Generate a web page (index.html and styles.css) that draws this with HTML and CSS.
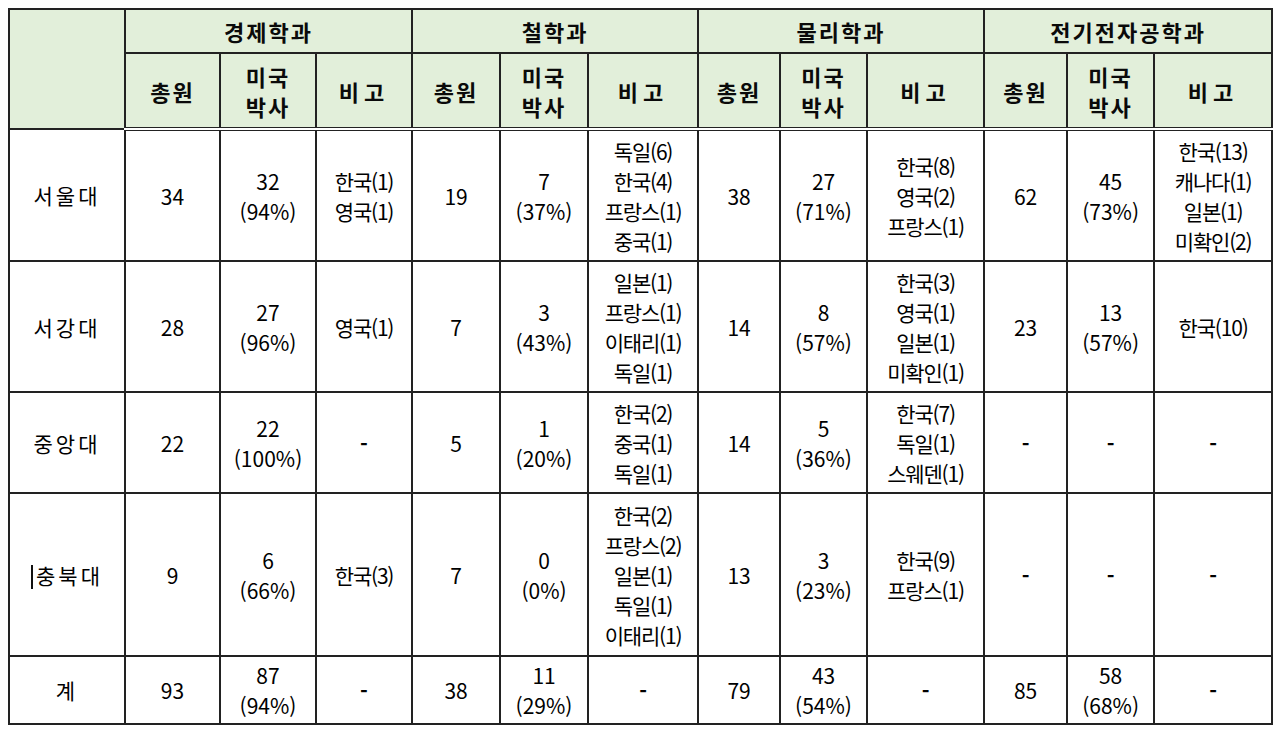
FILE: index.html
```html
<!DOCTYPE html>
<html lang="ko">
<head>
<meta charset="utf-8">
<link rel="stylesheet" href="styles.css">
</head>
<body>
<table class="tbl">
  <colgroup>
    <col class="c116"><col class="c95"><col class="c96"><col class="c96">
    <col class="c88"><col class="c88"><col class="c110">
    <col class="c82"><col class="c87"><col class="c117">
    <col class="c83"><col class="c87"><col class="c118">
  </colgroup>
  <thead>
    <tr class="h1">
      <th rowspan="2" class="corner"></th>
      <th colspan="3" class="grp">경제학과</th>
      <th colspan="3" class="grp">철학과</th>
      <th colspan="3" class="grp">물리학과</th>
      <th colspan="3" class="grp">전기전자공학과</th>
    </tr>
    <tr class="h2">
      <th>총원</th><th>미국<br>박사</th><th class="wide">비고</th>
      <th>총원</th><th>미국<br>박사</th><th class="wide">비고</th>
      <th>총원</th><th>미국<br>박사</th><th class="wide">비고</th>
      <th>총원</th><th>미국<br>박사</th><th class="wide">비고</th>
    </tr>
  </thead>
  <tbody>
    <tr class="r1">
      <td class="name">서울대</td>
      <td>34</td><td>32<br>(94%)</td><td class="note">한국(1)<br>영국(1)</td>
      <td>19</td><td>7<br>(37%)</td><td class="note">독일(6)<br>한국(4)<br>프랑스(1)<br>중국(1)</td>
      <td>38</td><td>27<br>(71%)</td><td class="note">한국(8)<br>영국(2)<br>프랑스(1)</td>
      <td>62</td><td>45<br>(73%)</td><td class="note">한국(13)<br>캐나다(1)<br>일본(1)<br>미확인(2)</td>
    </tr>
    <tr class="r2">
      <td class="name">서강대</td>
      <td>28</td><td>27<br>(96%)</td><td class="note">영국(1)</td>
      <td>7</td><td>3<br>(43%)</td><td class="note">일본(1)<br>프랑스(1)<br>이태리(1)<br>독일(1)</td>
      <td>14</td><td>8<br>(57%)</td><td class="note">한국(3)<br>영국(1)<br>일본(1)<br>미확인(1)</td>
      <td>23</td><td>13<br>(57%)</td><td class="note">한국(10)</td>
    </tr>
    <tr class="r3">
      <td class="name">중앙대</td>
      <td>22</td><td>22<br>(100%)</td><td class="dash">-</td>
      <td>5</td><td>1<br>(20%)</td><td class="note">한국(2)<br>중국(1)<br>독일(1)</td>
      <td>14</td><td>5<br>(36%)</td><td class="note">한국(7)<br>독일(1)<br>스웨덴(1)</td>
      <td class="dash">-</td><td class="dash">-</td><td class="dash">-</td>
    </tr>
    <tr class="r4">
      <td class="name"><span class="cursor"></span>충북대</td>
      <td>9</td><td>6<br>(66%)</td><td class="note">한국(3)</td>
      <td>7</td><td>0<br>(0%)</td><td class="note">한국(2)<br>프랑스(2)<br>일본(1)<br>독일(1)<br>이태리(1)</td>
      <td>13</td><td>3<br>(23%)</td><td class="note">한국(9)<br>프랑스(1)</td>
      <td class="dash">-</td><td class="dash">-</td><td class="dash">-</td>
    </tr>
    <tr class="r5">
      <td class="name">계</td>
      <td>93</td><td>87<br>(94%)</td><td class="dash">-</td>
      <td>38</td><td>11<br>(29%)</td><td class="dash">-</td>
      <td>79</td><td>43<br>(54%)</td><td class="dash">-</td>
      <td>85</td><td>58<br>(68%)</td><td class="dash">-</td>
    </tr>
  </tbody>
</table>
</body>
</html>
```

FILE: styles.css
```css
html, body {
  margin: 0;
  padding: 0;
  background: #ffffff;
}
body {
  padding: 8px;
  font-family: "Noto Sans CJK KR", "Noto Sans", sans-serif;
  color: #000;
}
.tbl {
  border-collapse: collapse;
  table-layout: fixed;
  width: 1263px;
  border: 2px solid #222;
}
.c116 { width: 116px; }
.c95 { width: 95px; }
.c96 { width: 96px; }
.c88 { width: 88px; }
.c110 { width: 110px; }
.c82 { width: 82px; }
.c87 { width: 87px; }
.c117 { width: 117px; }
.c83 { width: 83px; }
.c118 { width: 118px; }

.tbl th, .tbl td {
  border: 2px solid #222;
  padding: 0;
  text-align: center;
  vertical-align: middle;
  white-space: nowrap;
  overflow: hidden;
}
.tbl th {
  background: #e2efda;
  font-weight: 700;
  font-size: 22px;
  line-height: 30px;
  letter-spacing: 2px;
  color: #0a0a0a;
}
.tbl th.wide { letter-spacing: 5px; }
.h1 th { height: 42px; }
.h2 th { height: 73px; border-bottom: 4px double #222; }
.tbl td {
  font-size: 21px;
  line-height: 30px;
  color: #000;
}
.tbl td.note { letter-spacing: -1.2px; }
.tbl td.name { letter-spacing: 3px; }
.tbl td.dash { font-weight: 700; }
.r1 td { height: 129px; }
.r2 td { height: 129px; }
.r3 td { height: 99px; }
.r4 td { height: 161px; }
.r5 td { height: 66px; }
.cursor {
  display: inline-block;
  width: 2px;
  height: 24px;
  background: #111;
  vertical-align: -5px;
  margin-right: 3px;
}
```
